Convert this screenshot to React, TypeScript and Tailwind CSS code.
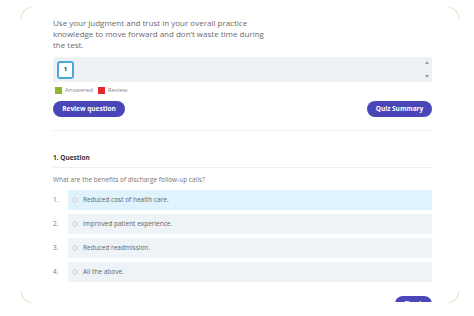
import React from "react";

const options = [
  { n: "1.", text: "Reduced cost of health care.", active: true },
  { n: "2.", text: "Improved patient experience.", active: false },
  { n: "3.", text: "Reduced readmission.", active: false },
  { n: "4.", text: "All the above.", active: false },
];

function Corner({ className, rotate }: { className: string; rotate: string }) {
  return (
    <svg
      className={`absolute ${className}`}
      width="12"
      height="14"
      viewBox="0 0 12 14"
      style={{ transform: rotate }}
    >
      <path d="M1 13 Q2 3 11 1" fill="none" stroke="#d6efcc" strokeWidth="1.2" />
    </svg>
  );
}

export default function App() {
  return (
    <div
      className="relative w-[474px] h-[316px] overflow-hidden bg-white"
      style={{ fontFamily: "'Open Sans', 'Liberation Sans', sans-serif" }}
    >
      <Corner className="left-[20px] top-[6px]" rotate="none" />
      <Corner className="right-[14px] top-[6px]" rotate="scaleX(-1)" />
      <Corner className="left-[20px] top-[290px]" rotate="scaleY(-1)" />
      <Corner className="right-[14px] top-[290px]" rotate="scale(-1,-1)" />

      <div className="h-[302px] overflow-hidden pl-[53px] pr-[42px] pt-[17px]">
        <p className="w-[218px] text-[8px] leading-[11px] text-[#6a6a6a]">
          Use your judgment and trust in your overall practice knowledge to move
          forward and don’t waste time during the test.
        </p>

        <div className="mt-[7px] flex h-[25px] items-center justify-between bg-[#eef2f5] pl-[4px] pr-[3px]">
          <div className="flex h-[18px] w-[17px] shrink-0 items-center justify-center rounded-[3px] border-2 border-[#4aa8de] bg-white text-[6px] font-bold text-[#333]">
            1
          </div>
          <div className="flex h-full flex-col justify-between py-[4px]">
            <svg width="4" height="3" viewBox="0 0 4 3">
              <path d="M0 3 L2 0 L4 3 Z" fill="#9a9a9a" />
            </svg>
            <svg width="4" height="3" viewBox="0 0 4 3">
              <path d="M0 0 L2 3 L4 0 Z" fill="#9a9a9a" />
            </svg>
          </div>
        </div>

        <div className="mt-[4px] flex items-center pl-[2px] text-[6px] leading-[8px] text-[#8a8a8a]">
          <span className="h-[7px] w-[7px] bg-[#8cb82b]" />
          <span className="ml-[3px]">Answered</span>
          <span className="ml-[5px] h-[7px] w-[7px] bg-[#e0282e]" />
          <span className="ml-[3px]">Review</span>
        </div>

        <div className="mt-[7px] flex items-center justify-between">
          <button className="h-[16px] w-[72px] rounded-full bg-[#4a46b8] text-[6.5px] font-bold text-white">
            Review question
          </button>
          <button className="h-[16px] w-[65px] rounded-full bg-[#4a46b8] text-[6.5px] font-bold text-white">
            Quiz Summary
          </button>
        </div>

        <div className="mt-[13px] h-px bg-[#f0f0f0]" />

        <div className="mt-[22px] border-b border-[#efefef] pb-[4px] text-[6.5px] font-bold leading-[10px] text-[#333]">
          1. Question
        </div>

        <div className="mt-[7px] text-[6.5px] leading-[10px] text-[#777]">
          What are the benefits of discharge follow-up calls?
        </div>

        <div className="mt-[5px] flex flex-col gap-[4px]">
          {options.map((o) => (
            <div key={o.n} className="flex items-center">
              <span className="w-[15px] text-[6.5px] text-[#777]">{o.n}</span>
              <div
                className={`flex h-[20px] flex-1 items-center pl-[4px] ${
                  o.active ? "bg-[#def3fb]" : "bg-[#eef3f7]"
                }`}
              >
                <span className="h-[6px] w-[6px] rounded-full border border-[#d5d5d5] bg-[#ececec]" />
                <span className="ml-[5px] text-[6.5px] text-[#666]">{o.text}</span>
              </div>
            </div>
          ))}
        </div>

        <div className="mt-[14px] flex justify-end">
          <button className="h-[16px] w-[37px] rounded-full bg-[#4a46b8] text-[6.5px] font-bold text-white">
            Check
          </button>
        </div>
      </div>
    </div>
  );
}
